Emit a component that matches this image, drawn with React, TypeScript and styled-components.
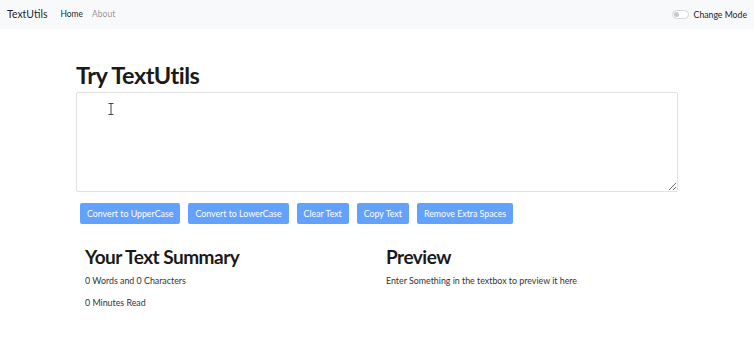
import React from "react";
import styled, { createGlobalStyle } from "styled-components";

const GlobalStyle = createGlobalStyle`
  * { box-sizing: border-box; }
  body {
    margin: 0;
    background: #ffffff;
    color: #212529;
    font-family: Lato, "Open Sans", sans-serif;
    font-size: 9px;
    line-height: 1.5;
  }
`;

const Navbar = styled.nav`
  height: 29px;
  background: #f8f9fa;
  display: flex;
  align-items: center;
  padding: 0 7px;
`;

const Brand = styled.span`
  font-size: 10.5px;
  color: rgba(0, 0, 0, 0.9);
  margin-right: 13px;
`;

const NavLink = styled.span<{ $active?: boolean }>`
  font-size: 8.5px;
  color: ${(p) => (p.$active ? "rgba(0,0,0,0.9)" : "rgba(0,0,0,0.45)")};
  margin-right: 9px;
`;

const Spacer = styled.div`
  flex: 1;
`;

const Switch = styled.label`
  display: flex;
  align-items: center;
  gap: 5px;
  font-size: 8.7px;
  color: #212529;
`;

const Track = styled.span`
  width: 17px;
  height: 9px;
  border: 1px solid #d3d6d9;
  border-radius: 5px;
  background: #fff;
  position: relative;
  &::after {
    content: "";
    position: absolute;
    left: 1px;
    top: 1px;
    width: 5px;
    height: 5px;
    border-radius: 50%;
    background: #c4c8cc;
  }
`;

const Container = styled.main`
  width: 602px;
  margin: 0 auto;
`;

const Title = styled.h1`
  margin: 32px 0 0;
  font-size: 23.5px;
  font-weight: 700;
  letter-spacing: -0.5px;
  line-height: 1.2;
  color: #1a1a1a;
`;

const EditorWrap = styled.div`
  position: relative;
  margin-top: 3px;
`;

const Editor = styled.textarea`
  display: block;
  width: 100%;
  height: 100px;
  border: 1px solid #dee2e6;
  border-radius: 2px;
  padding: 4px 8px;
  font: inherit;
  outline: none;
`;

const Cursor = styled.svg`
  position: absolute;
  left: 32px;
  top: 11px;
  pointer-events: none;
`;

const Buttons = styled.div`
  display: flex;
  gap: 8px;
  margin: 11px 0 0 4px;
`;

const Button = styled.button`
  height: 21px;
  padding: 0 7px;
  border: none;
  border-radius: 2px;
  background: #62a1fe;
  color: #fff;
  font-family: inherit;
  font-size: 8.8px;
`;

const Summary = styled.section`
  display: grid;
  grid-template-columns: 1fr 1fr;
  margin-top: 22px;
`;

const Column = styled.div`
  padding-left: 9px;
`;

const Heading = styled.h2`
  margin: 0 0 5px;
  font-size: 19px;
  font-weight: 700;
  letter-spacing: -0.5px;
  line-height: 1.2;
  color: #1a1a1a;
`;

const Para = styled.p`
  margin: 0 0 8px;
  font-size: 8.85px;
  line-height: 14px;
  color: #333;
`;

export default function App() {
  return (
    <>
      <GlobalStyle />
      <Navbar>
        <Brand>TextUtils</Brand>
        <NavLink $active>Home</NavLink>
        <NavLink>About</NavLink>
        <Spacer />
        <Switch>
          <Track />
          Change Mode
        </Switch>
      </Navbar>
      <Container>
        <Title>Try TextUtils</Title>
        <EditorWrap>
          <Editor />
          <Cursor width="6" height="12" viewBox="0 0 6 12">
            <path d="M0.5 0.5h5M0.5 11.5h5M3 0.5v11" stroke="#444" strokeWidth="1" fill="none" />
          </Cursor>
        </EditorWrap>
        <Buttons>
          <Button>Convert to UpperCase</Button>
          <Button>Convert to LowerCase</Button>
          <Button>Clear Text</Button>
          <Button>Copy Text</Button>
          <Button>Remove Extra Spaces</Button>
        </Buttons>
        <Summary>
          <Column>
            <Heading>Your Text Summary</Heading>
            <Para>0 Words and 0 Characters</Para>
            <Para>0 Minutes Read</Para>
          </Column>
          <Column>
            <Heading>Preview</Heading>
            <Para>Enter Something in the textbox to preview it here</Para>
          </Column>
        </Summary>
      </Container>
    </>
  );
}
